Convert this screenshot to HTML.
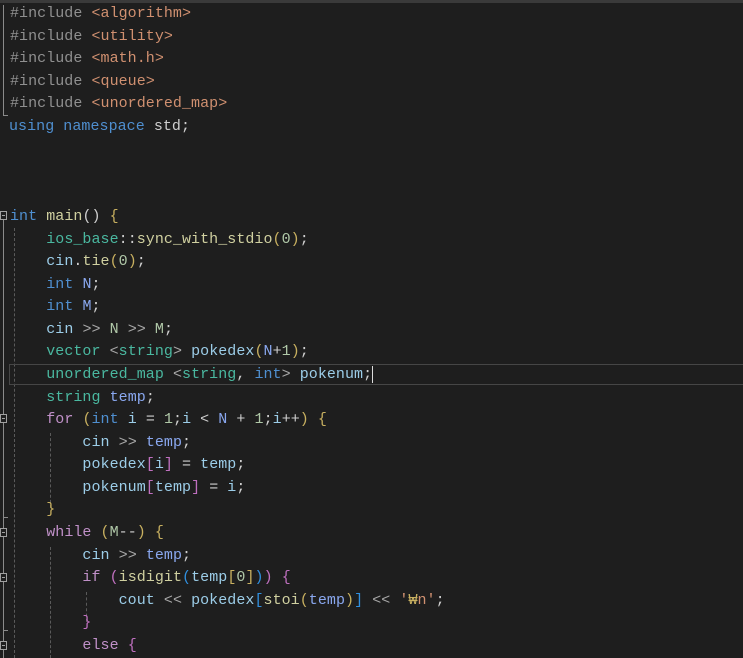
<!DOCTYPE html>
<html><head><meta charset="utf-8"><style>
html,body{margin:0;padding:0;background:#1e1e1e;width:743px;height:658px;overflow:hidden;position:relative}
.top{position:absolute;left:0;top:0;width:743px;height:3px;background:#3a3a3a}
.l{position:absolute;left:10px;height:22px;line-height:22px;font-family:"Liberation Mono","DejaVu Sans Mono","Noto Sans CJK KR",monospace;font-size:15px;color:#cfcfcf;white-space:pre;letter-spacing:0.05px;top:1px}
.pp{color:#909090}.s{color:#d09070}.k{color:#4f8fd0}.t{color:#4ab8a0}.f{color:#d0d0a0}.c{color:#c090c8}
.v{color:#9ccde8}.tv{color:#8aa8f0}.n{color:#b0c8a8}.y{color:#c8b060}.p{color:#c070c0}.b{color:#3090e0}.o{color:#a8a8a8}
.fold{position:absolute;left:0;width:7px;height:9px;border:1px solid #a0a0a0;box-sizing:border-box}
.fold:after{content:"";position:absolute;left:1px;top:3px;width:3px;height:1px;background:#a0a0a0}
.vl{position:absolute;left:3px;width:1px;background:#8a8a8a}
.g{position:absolute;width:0;border-left:1px dashed #5a5a5a}
.cur{position:absolute;left:9px;top:364px;width:740px;height:21px;border:1px solid #464646;box-sizing:border-box}
</style></head><body>
<div class="top"></div>
<div class="vl" style="top:5px;height:111px"></div>
<div class="vl" style="top:115px;height:1px;width:5px"></div>
<div class="fold" style="top:211px"></div>
<div class="vl" style="top:220px;height:438px"></div>
<div class="fold" style="top:414px;background:#1e1e1e"></div>
<div class="fold" style="top:528px;background:#1e1e1e"></div>
<div class="fold" style="top:573px;background:#1e1e1e"></div>
<div class="fold" style="top:641px;background:#1e1e1e"></div>
<div class="vl" style="top:517px;height:1px;width:5px"></div>
<div class="vl" style="top:630px;height:1px;width:5px"></div>
<div class="g" style="left:14px;top:228px;height:430px"></div>
<div class="g" style="left:50px;top:433px;height:75px"></div>
<div class="g" style="left:50px;top:547px;height:111px"></div>
<div class="g" style="left:86px;top:592px;height:30px"></div>
<div class="cur"></div>
<div class="l" style="top:3px"><span class="pp">#include </span><span class="s">&lt;algorithm&gt;</span></div>
<div class="l" style="top:26px"><span class="pp">#include </span><span class="s">&lt;utility&gt;</span></div>
<div class="l" style="top:48px"><span class="pp">#include </span><span class="s">&lt;math.h&gt;</span></div>
<div class="l" style="top:71px"><span class="pp">#include </span><span class="s">&lt;queue&gt;</span></div>
<div class="l" style="top:93px"><span class="pp">#include </span><span class="s">&lt;unordered_map&gt;</span></div>
<div class="l" style="top:116px;left:9px"><span class="k">using namespace</span> std;</div>
<div class="l" style="top:206px"><span class="k">int</span> <span class="f">main</span>() <span class="y">{</span></div>
<div class="l" style="top:229px">    <span class="t">ios_base</span>::<span class="f">sync_with_stdio</span><span class="y">(</span><span class="n">0</span><span class="y">)</span>;</div>
<div class="l" style="top:251px">    <span class="v">cin</span>.<span class="f">tie</span><span class="y">(</span><span class="n">0</span><span class="y">)</span>;</div>
<div class="l" style="top:274px">    <span class="k">int</span> <span class="tv">N</span>;</div>
<div class="l" style="top:296px">    <span class="k">int</span> <span class="tv">M</span>;</div>
<div class="l" style="top:319px">    <span class="v">cin</span> <span class="o">&gt;&gt;</span> <span class="n">N</span> <span class="o">&gt;&gt;</span> <span class="n">M</span>;</div>
<div class="l" style="top:341px">    <span class="t">vector</span> <span class="o">&lt;</span><span class="t">string</span><span class="o">&gt;</span> <span class="v">pokedex</span><span class="y">(</span><span class="tv">N</span>+<span class="n">1</span><span class="y">)</span>;</div>
<div class="l" style="top:364px">    <span class="t">unordered_map</span> <span class="o">&lt;</span><span class="t">string</span>, <span class="k">int</span><span class="o">&gt;</span> <span class="v">pokenum</span>;<span style="border-left:1px solid #dcdcdc"></span></div>
<div class="l" style="top:387px">    <span class="t">string</span> <span class="tv">temp</span>;</div>
<div class="l" style="top:409px">    <span class="c">for</span> <span class="y">(</span><span class="k">int</span> <span class="v">i</span> = <span class="n">1</span>;<span class="v">i</span> &lt; <span class="tv">N</span> + <span class="n">1</span>;<span class="v">i</span>++<span class="y">)</span> <span class="y">{</span></div>
<div class="l" style="top:432px">        <span class="v">cin</span> <span class="o">&gt;&gt;</span> <span class="tv">temp</span>;</div>
<div class="l" style="top:454px">        <span class="v">pokedex</span><span class="p">[</span><span class="v">i</span><span class="p">]</span> = <span class="v">temp</span>;</div>
<div class="l" style="top:477px">        <span class="v">pokenum</span><span class="p">[</span><span class="v">temp</span><span class="p">]</span> = <span class="v">i</span>;</div>
<div class="l" style="top:499px">    <span class="y">}</span></div>
<div class="l" style="top:522px">    <span class="c">while</span> <span class="y">(</span><span class="n">M</span>--<span class="y">)</span> <span class="y">{</span></div>
<div class="l" style="top:545px">        <span class="v">cin</span> <span class="o">&gt;&gt;</span> <span class="tv">temp</span>;</div>
<div class="l" style="top:567px">        <span class="c">if</span> <span class="p">(</span><span class="f">isdigit</span><span class="b">(</span><span class="v">temp</span><span class="y">[</span><span class="n">0</span><span class="y">]</span><span class="b">)</span><span class="p">)</span> <span class="p">{</span></div>
<div class="l" style="top:590px">            <span class="v">cout</span> <span class="o">&lt;&lt;</span> <span class="v">pokedex</span><span class="b">[</span><span class="f">stoi</span><span class="y">(</span><span class="tv">temp</span><span class="y">)</span><span class="b">]</span> <span class="o">&lt;&lt;</span> <span class="s">'<span class="y">₩</span>n'</span>;</div>
<div class="l" style="top:612px">        <span class="p">}</span></div>
<div class="l" style="top:635px">        <span class="c">else</span> <span class="p">{</span></div>
</body></html>
